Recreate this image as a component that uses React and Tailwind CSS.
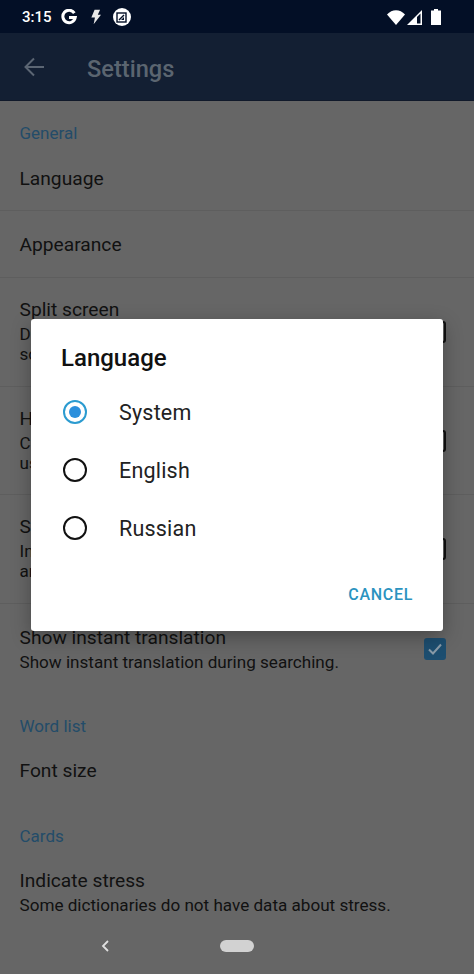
import React from "react";

function Check({ checked }) {
  return checked ? (
    <div className="w-[22px] h-[22px] rounded-[3px] bg-[#1d4e70] flex items-center justify-center shrink-0">
      <svg width="18" height="18" viewBox="0 0 18 18" fill="none" stroke="#8a9ba8" strokeWidth="2">
        <path d="M3 9.5 L7 13.5 L15 4.5" />
      </svg>
    </div>
  ) : (
    <div className="w-[22px] h-[22px] rounded-[3px] border-2 border-[#111] shrink-0" />
  );
}

function Header({ children, h = "h-[45px]", pt = "pt-[21px]" }) {
  return <div className={`${h} ${pt} pl-[19.5px] pr-5 text-[17px] leading-[22px] font-normal text-[#234c69]`}>{children}</div>;
}

function Plain({ title, h, pt = "pt-[2px]", border = true }) {
  return (
    <div className={`${h} pl-[19.5px] pr-5 flex items-center text-[19.2px] text-[#111] ${border ? "border-b border-[#5e5e5e]" : ""}`}>
      <span className={pt}>{title}</span>
    </div>
  );
}

function Row({ title, lines, h, pt, checked, border = true, check = true }) {
  return (
    <div className={`${h} pl-[19.5px] pr-[28px] flex justify-between items-center ${border ? "border-b border-[#5e5e5e]" : ""}`}>
      <div className={`self-start ${pt}`}>
        <div className="text-[19.2px] leading-6 text-[#111]">{title}</div>
        <div className="mt-[2px] text-[17.1px] leading-5 text-[#111] whitespace-pre-line">{lines}</div>
      </div>
      {check && <Check checked={checked} />}
    </div>
  );
}

function Radio({ on, label }) {
  return (
    <div className="h-[58px] flex items-center pl-[32px]">
      {on ? (
        <div className="w-6 h-6 rounded-full border-[2.5px] border-[#2b9bd0] flex items-center justify-center">
          <div className="w-3 h-3 rounded-full bg-[#2b8fdc]" />
        </div>
      ) : (
        <div className="w-6 h-6 rounded-full border-[2.5px] border-[#111]" />
      )}
      <span className="ml-8 pt-[2px] text-[21.5px] tracking-[0.2px] text-[#222]">{label}</span>
    </div>
  );
}

export default function App() {
  return (
    <div className="relative w-[474px] h-[974px] overflow-hidden bg-[#666666] font-['Roboto',sans-serif]">
      <div className="h-[33px] pt-px bg-[#030f26] flex items-center justify-between pl-[22px] pr-[33px] text-white">
        <div className="flex items-center">
          <span className="text-[15px] font-medium leading-none">3:15</span>
          <svg className="ml-[9px]" width="16" height="16" viewBox="0 0 18 18" fill="none" stroke="#fff" strokeWidth="3.4">
            <path d="M15 4.6 A7 7 0 1 0 16 9.6 H9" />
          </svg>
          <svg className="ml-[13px]" width="11" height="18" viewBox="0 0 12 18" fill="#e8e8e8">
            <path d="M5 1 H11 L8.5 6.5 H12 L4 17 L5.4 9.5 H1.5 Z" />
          </svg>
          <div className="ml-[12px] w-[18px] h-[18px] rounded-full bg-white flex items-center justify-center">
            <svg width="11" height="11" viewBox="0 0 11 11" fill="none" stroke="#030f26" strokeWidth="1.4">
              <rect x="1" y="1" width="9" height="9" />
              <path d="M3 8 L8 3" />
              <path d="M5 8 H8 V5" fill="#030f26" stroke="none" />
            </svg>
          </div>
        </div>
        <div className="flex items-center">
          <svg width="18" height="15" viewBox="0 0 18 15" fill="#fff">
            <path d="M0 4.5 C5 -1.2 13 -1.2 18 4.5 L9 15 Z" />
          </svg>
          <svg className="ml-[2px]" width="15" height="15" viewBox="0 0 15 15">
            <path d="M0 15 L15 0 V15 Z" fill="#fff" />
            <path d="M10 7 L13.5 3.5 V13.5 H10 Z" fill="#030f26" />
          </svg>
          <svg className="ml-[9px]" width="10" height="16" viewBox="0 0 10 16" fill="#fff">
            <path d="M3 0 H7 V1.5 H10 V16 H0 V1.5 H3 Z" />
          </svg>
        </div>
      </div>

      <div className="h-[68px] bg-[#131f33] flex items-center pl-[24px] border-b border-[#10192a]">
        <svg className="mt-[1px]" width="20" height="20" viewBox="0 0 20 20" fill="none" stroke="#5b6573" strokeWidth="2">
          <path d="M20 10 H1.5 M10 1.5 L1.5 10 L10 18.5" />
        </svg>
        <span className="ml-[43px] pt-[6px] text-[23.6px] font-medium text-[#5b6570]">Settings</span>
      </div>

      <Header h="h-[45px]" pt="pt-[21px]">General</Header>
      <Plain title="Language" h="h-[65px]" />
      <Plain title="Appearance" h="h-[67px]" />
      <Row title="Split screen" lines={"Display two panels side by side on large\nscreens."} h="h-[109px]" pt="pt-[20px]" />
      <Row title="History" lines={"Clear the history of the searches when\nusing the application."} h="h-[108px]" pt="pt-[20px]" />
      <Row title="Search" lines={"Instantly open the article in the\nand show results."} h="h-[109px]" pt="pt-[20px]" />
      <Row title="Show instant translation" lines="Show instant translation during searching." h="h-[89px]" pt="pt-[22px]" checked border={false} />
      <Header h="h-[52px]" pt="pt-[22px]">Word list</Header>
      <Plain title="Font size" h="h-[52px]" pt="pt-0" border={false} />
      <Header h="h-[62px]" pt="pt-[28px]">Cards</Header>
      <Row title="Indicate stress" lines="Some dictionaries do not have data about stress." h="h-[67px]" pt="pt-[10px]" border={false} check={false} />

      <div className="h-[49px] pb-[9px] relative flex items-center justify-center">
        <svg className="absolute left-[100px]" width="10" height="14" viewBox="0 0 10 14" fill="none" stroke="#e0e0e0" strokeWidth="1.8">
          <path d="M8 2 L3 7 L8 12" />
        </svg>
        <div className="w-[34px] h-3 rounded-full bg-[#d2d2d2]" />
      </div>

      <div className="absolute left-[31px] top-[319px] w-[412px] h-[312px] bg-white rounded-[3px] shadow-[0_6px_20px_rgba(0,0,0,0.3)]">
        <div className="pl-[30px] pt-[24px] h-[64px] text-[24px] leading-[30px] font-medium text-[#111]">Language</div>
        <Radio on label="System" />
        <Radio label="English" />
        <Radio label="Russian" />
        <div className="absolute right-[30px] bottom-[26px] text-[16px] leading-5 font-medium tracking-[0.7px] text-[#2b93c0]">CANCEL</div>
      </div>
    </div>
  );
}
